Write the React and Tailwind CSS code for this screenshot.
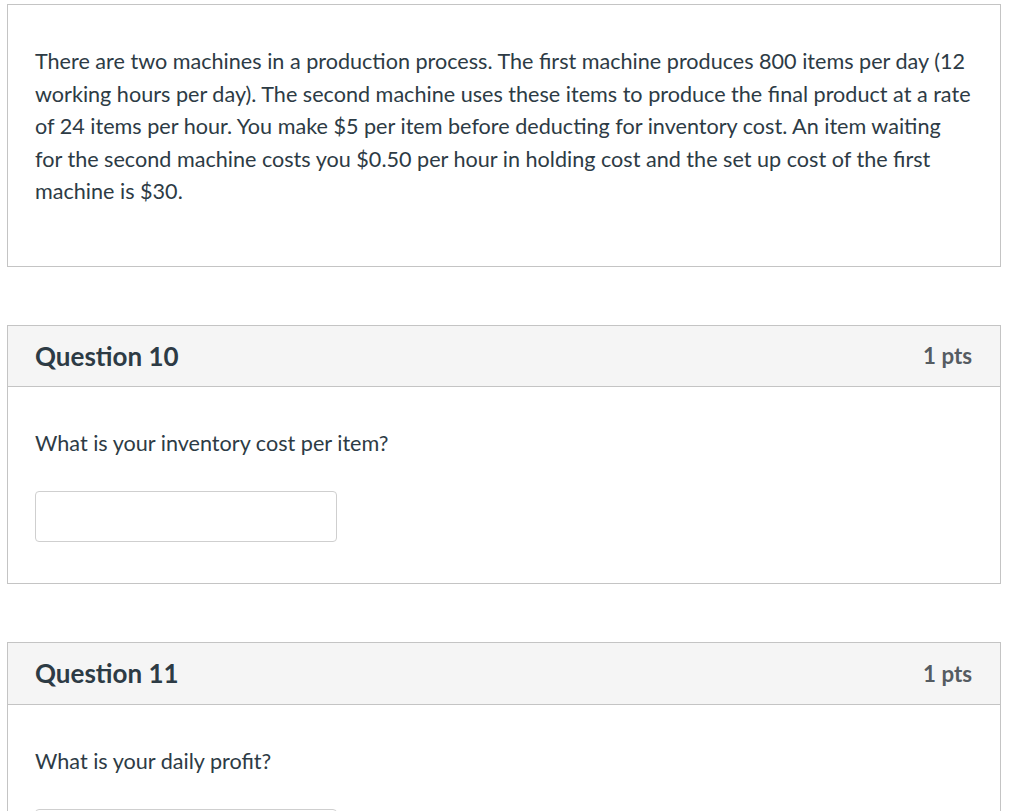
export default function App() {
  const font = { fontFamily: "Lato, 'Open Sans', sans-serif" };
  return (
    <div className="w-[1024px] h-[811px] overflow-hidden bg-white text-[#2d3b45]" style={font}>
      <div className="pt-[4px] pl-[7px] w-[1001px] flex flex-col gap-[58px]">
        <div className="border border-[#c4c4c4] h-[263px] px-[27px] pt-[40px]">
          <p className="text-[21.6px] leading-[32.5px]">
            There are two machines in a production process. The first machine produces 800 items per day (12 working hours per day). The second machine uses these items to produce the final product at a rate of 24 items per hour. You make $5 per item before deducting for inventory cost. An item waiting for the second machine costs you $0.50 per hour in holding cost and the set up cost of the first machine is $30.
          </p>
        </div>

        <div className="border border-[#c4c4c4] h-[259px] flex flex-col">
          <div className="h-[61px] shrink-0 bg-[#f5f5f5] border-b border-[#c4c4c4] flex items-center justify-between pl-[27px] pr-[28px]">
            <span className="text-[26px] font-bold">Question 10</span>
            <span className="text-[22.3px] font-bold text-[#555c62]">1 pts</span>
          </div>
          <div className="px-[27px] pt-[40px]">
            <p className="text-[21.6px] leading-[32px]">What is your inventory cost per item?</p>
            <div className="mt-[32px] w-[302px] h-[51px] border border-[#cfcfcf] rounded-[4px]"></div>
          </div>
        </div>

        <div className="border border-[#c4c4c4] h-[260px] flex flex-col">
          <div className="h-[62px] shrink-0 bg-[#f5f5f5] border-b border-[#c4c4c4] flex items-center justify-between pl-[27px] pr-[28px]">
            <span className="text-[26px] font-bold">Question 11</span>
            <span className="text-[22.3px] font-bold text-[#555c62]">1 pts</span>
          </div>
          <div className="px-[27px] pt-[40px]">
            <p className="text-[21.6px] leading-[32px]">What is your daily profit?</p>
            <div className="mt-[32px] w-[302px] h-[51px] border border-[#cfcfcf] rounded-[4px]"></div>
          </div>
        </div>
      </div>
    </div>
  );
}
